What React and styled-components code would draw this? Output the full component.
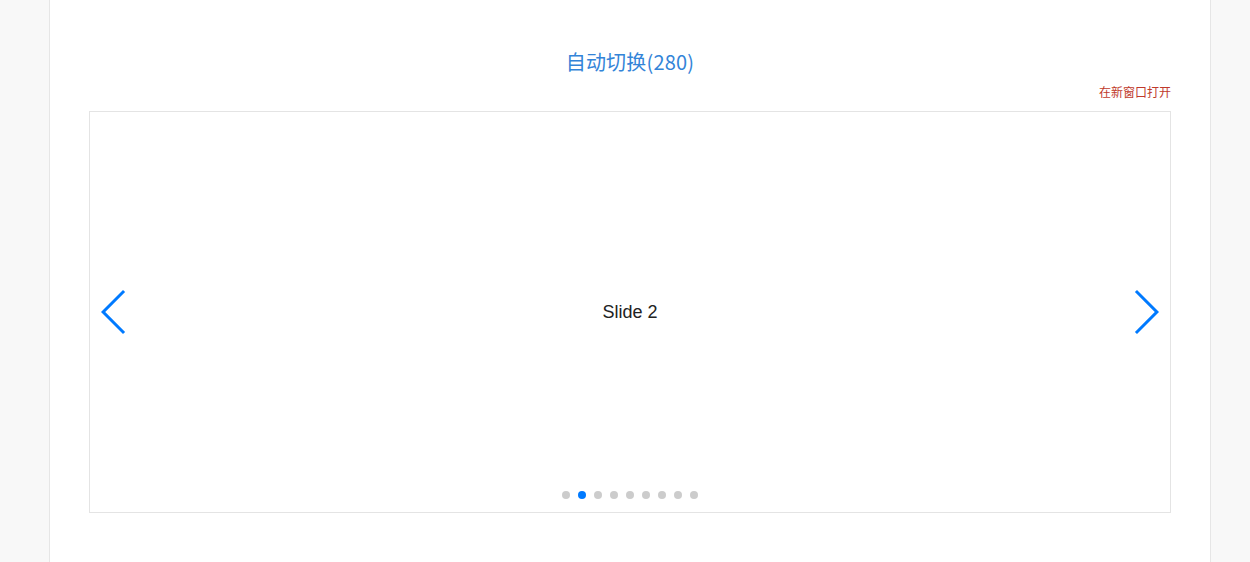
import styled, { createGlobalStyle } from "styled-components";

const GlobalStyle = createGlobalStyle`
  html, body {
    margin: 0;
    padding: 0;
    background: #f8f8f8;
  }
  body {
    font-family: "Liberation Sans", "Noto Sans CJK SC", sans-serif;
  }
`;

const Panel = styled.div`
  box-sizing: border-box;
  width: 1162px;
  min-height: 562px;
  margin-left: 49px;
  padding: 48px 39px 0;
  background: #fff;
  border-left: 1px solid #e6e6e6;
  border-right: 1px solid #e6e6e6;
  display: flex;
  flex-direction: column;
`;

const Title = styled.h2`
  margin: 0;
  font-size: 20px;
  line-height: 28px;
  font-weight: 400;
  letter-spacing: 0.2px;
  text-align: center;
  color: #3384d8;
  font-family: "Noto Sans CJK SC", "Liberation Sans", sans-serif;
`;

const LinkRow = styled.div`
  display: flex;
  justify-content: flex-end;
  margin-top: 8px;
  margin-bottom: 11px;
`;

const NewWindow = styled.a`
  font-size: 12px;
  line-height: 16px;
  color: #c0392b;
  text-decoration: none;
  font-family: "Noto Sans CJK SC", sans-serif;
  cursor: pointer;
`;

const Carousel = styled.div`
  position: relative;
  box-sizing: border-box;
  height: 402px;
  border: 1px solid #e4e4e4;
  display: flex;
  align-items: center;
  justify-content: center;
`;

const Slide = styled.div`
  font-size: 18px;
  color: #222;
  font-family: "Liberation Sans", Arial, sans-serif;
`;

const NavButton = styled.button`
  position: absolute;
  top: 50%;
  margin-top: -22px;
  ${(p) => (p.$side === "left" ? "left: 11px;" : "right: 11px;")}
  width: 27px;
  height: 44px;
  padding: 0;
  border: 0;
  background: none;
  cursor: pointer;
  svg {
    display: block;
  }
`;

const Dots = styled.div`
  position: absolute;
  left: 0;
  right: 0;
  bottom: 13px;
  display: flex;
  justify-content: center;
  gap: 8px;
`;

const Dot = styled.span`
  width: 8px;
  height: 8px;
  border-radius: 50%;
  background: ${(p) => (p.$active ? "#007aff" : "#cccccc")};
`;

const Arrow = ({ flip }) => (
  <svg width="27" height="44" viewBox="0 0 27 44">
    <path
      d="M0,22L22,0l2.1,2.1L4.2,22l19.9,19.9L22,44L0,22z"
      fill="#007aff"
      transform={flip ? "translate(27,0) scale(-1,1)" : undefined}
    />
  </svg>
);

export default function App() {
  const active = 1;
  return (
    <>
      <GlobalStyle />
      <Panel>
        <Title>自动切换(280)</Title>
        <LinkRow>
          <NewWindow>在新窗口打开</NewWindow>
        </LinkRow>
        <Carousel>
          <NavButton $side="left" aria-label="上一张">
            <Arrow />
          </NavButton>
          <Slide>Slide 2</Slide>
          <NavButton $side="right" aria-label="下一张">
            <Arrow flip />
          </NavButton>
          <Dots>
            {Array.from({ length: 9 }, (_, i) => (
              <Dot key={i} $active={i === active} />
            ))}
          </Dots>
        </Carousel>
      </Panel>
    </>
  );
}
